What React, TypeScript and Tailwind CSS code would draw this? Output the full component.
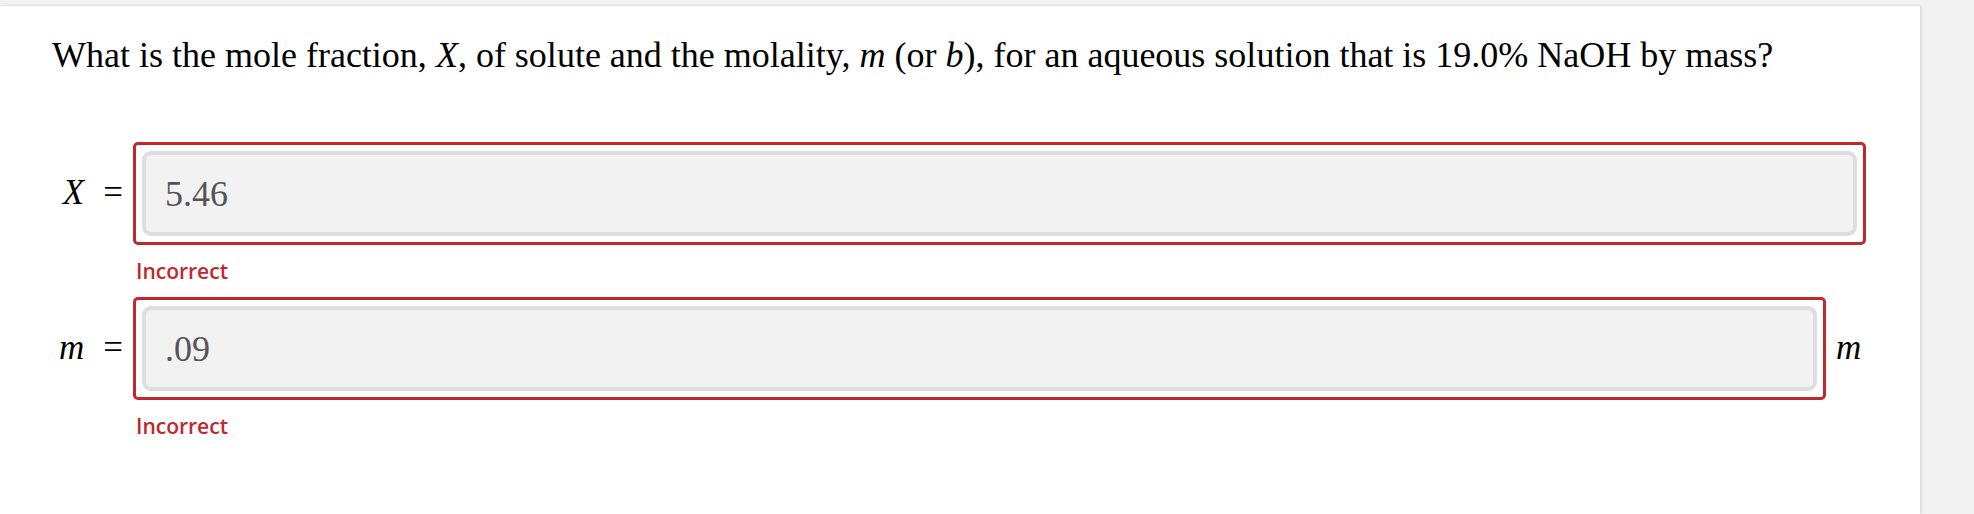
const serif = "font-['Liberation_Serif','Times_New_Roman',serif]";

function AnswerRow({
  symbol,
  value,
  boxWidth,
  unit,
}: {
  symbol: string;
  value: string;
  boxWidth: string;
  unit?: string;
}) {
  return (
    <div>
      <div className="flex items-center">
        <div className="font-['Liberation_Serif','Times_New_Roman',serif] w-[82px] flex justify-end items-baseline text-[35px] text-black pr-[10px]">
          <span className="italic">{symbol}</span>
          <span className="ml-[19px]">=</span>
        </div>
        <div className={`${boxWidth} border-[3px] border-[#c0282e] rounded-[5px] p-[6px]`}>
          <div className="font-['Liberation_Serif','Times_New_Roman',serif] h-[85px] flex items-center bg-[#f2f2f2] border-[4px] border-[#dedede] rounded-[9px] pl-[19px] text-[36px] text-[#555555]">
            {value}
          </div>
        </div>
        {unit && (
          <span className="font-['Liberation_Serif','Times_New_Roman',serif] italic text-[35px] text-black ml-[10px]">
            {unit}
          </span>
        )}
      </div>
      <div className="font-['Open_Sans',sans-serif] font-semibold text-[21px] text-[#c0282e] pl-[85px] mt-[12px] leading-[28px]">
        Incorrect
      </div>
    </div>
  );
}

export default function App() {
  return (
    <div className="w-[1974px] h-[514px] bg-[#f2f2f2] flex overflow-hidden">
      <div className="w-[1920px] mt-[6px] bg-white shadow-[1px_0_3px_rgba(0,0,0,0.15)] pl-[52px] pt-[29px]">
        <p className={`${serif} text-[36px] leading-[40px] text-black`}>
          What is the mole fraction, <i>X</i>, of solute and the molality, <i>m</i> (or <i>b</i>), for an aqueous
          solution that is 19.0% NaOH by mass?
        </p>
        <div className="mt-[67px] ml-[-1px] flex flex-col gap-[12px]">
          <AnswerRow symbol="X" value="5.46" boxWidth="w-[1733px]" />
          <AnswerRow symbol="m" value=".09" boxWidth="w-[1693px]" unit="m" />
        </div>
      </div>
    </div>
  );
}
